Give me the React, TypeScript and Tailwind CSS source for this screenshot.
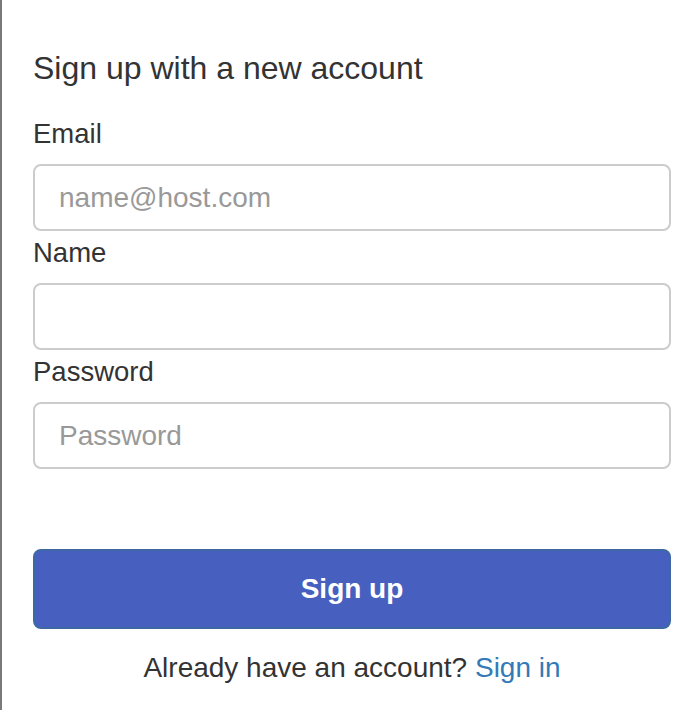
import React from 'react'

function App() {
  return (
    <div
      className="min-h-[710px] bg-white border-l-2 border-[#7a7a7a] pl-[31px] pr-[21px] pt-[51px]"
      style={{ fontFamily: '"Liberation Sans", Arial, sans-serif' }}
    >
      <h1 className="text-[32px] leading-[35px] text-[#333] mb-[33px]">
        Sign up with a new account
      </h1>
      <form className="flex flex-col">
        <label className="text-[27.5px] leading-[30px] text-[#333] mb-[15px]">Email</label>
        <input
          type="text"
          placeholder="name@host.com"
          className="h-[67px] mb-[7px] border-2 border-[#ccc] rounded-[8px] px-[24px] text-[28px] text-[#555] placeholder:text-[#999] outline-none"
        />
        <label className="text-[27.5px] leading-[30px] text-[#333] mb-[15px]">Name</label>
        <input
          type="text"
          className="h-[67px] mb-[7px] border-2 border-[#ccc] rounded-[8px] px-[24px] text-[28px] text-[#555] outline-none"
        />
        <label className="text-[27.5px] leading-[30px] text-[#333] mb-[15px]">Password</label>
        <input
          type="password"
          placeholder="Password"
          className="h-[67px] border-2 border-[#ccc] rounded-[8px] px-[24px] text-[28px] text-[#555] placeholder:text-[#999] outline-none"
        />
        <button
          type="button"
          className="mt-[80px] h-[80px] bg-[#4760c0] border-2 border-[#3e67a3] rounded-[8px] text-white text-[28px] font-bold"
        >
          Sign up
        </button>
      </form>
      <p className="mt-[23px] text-center text-[28px] leading-[32px] text-[#333]">
        Already have an account? <a className="text-[#337ab7]">Sign in</a>
      </p>
    </div>
  )
}

export default App
